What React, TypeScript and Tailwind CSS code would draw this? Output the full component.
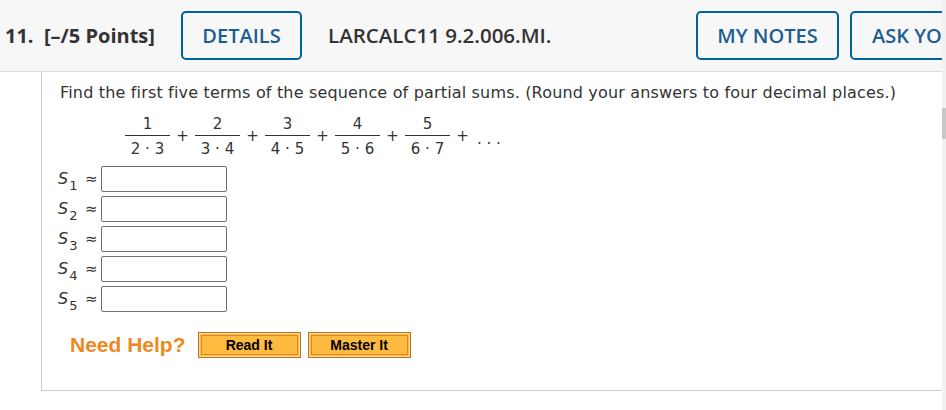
import React from 'react';

const terms = [
  { num: '1', den: '2 · 3' },
  { num: '2', den: '3 · 4' },
  { num: '3', den: '4 · 5' },
  { num: '4', den: '5 · 6' },
  { num: '5', den: '6 · 7' },
];

const HeaderButton: React.FC<{ label: string; className?: string }> = ({ label, className = '' }) => (
  <button
    className={`h-[49px] rounded-[5px] border-2 border-[#00629b] bg-transparent text-[20px] font-semibold text-[#1d5e91] ${className}`}
  >
    {label}
  </button>
);

const HelpButton: React.FC<{ label: string }> = ({ label }) => (
  <button className="h-[26px] w-[103px] border border-[#b8722a] bg-[#ffbb40] p-[2px] shadow-[inset_0_0_0_1px_#ffd98a]">
    <span className="flex h-full w-full items-center justify-center border border-[#cf8a35] text-[14px] font-bold text-black [font-family:'Liberation_Sans',Arial,sans-serif]">
      {label}
    </span>
  </button>
);

export default function App() {
  return (
    <div className="flex h-[410px] w-[946px] overflow-hidden bg-white">
      <div className="flex min-w-0 flex-1 flex-col overflow-hidden">
        {/* question header */}
        <div className="flex h-[72px] shrink-0 items-center border-b border-[#dddddd] bg-[#f7f7f7] pl-[5px] [font-family:'Open_Sans',sans-serif]">
          <span className="w-[176px] shrink-0 text-[20px] font-bold text-[#333]">11.&nbsp; [–/5 Points]</span>
          <HeaderButton label="DETAILS" className="w-[121px] shrink-0" />
          <span className="ml-[26px] w-[368px] shrink-0 text-[20.5px] font-semibold text-[#333]">LARCALC11 9.2.006.MI.</span>
          <HeaderButton label="MY NOTES" className="w-[143px] shrink-0" />
          <HeaderButton label="ASK YOUR TEACHER" className="ml-[11px] w-[220px] shrink-0 whitespace-nowrap px-[20px] text-left" />
        </div>

        {/* question body */}
        <div className="ml-[41px] w-[940px] shrink-0 border-b border-l border-[#cccccc] pb-[32px] pl-[18px] pt-[9px] text-[#333] [font-family:'DejaVu_Sans',Verdana,sans-serif]">
          <p className="text-[16px] leading-[24px] tracking-[0.17px]">
            Find the first five terms of the sequence of partial sums. (Round your answers to four decimal places.)
          </p>

          {/* series */}
          <div className="ml-[65px] mt-[10px] flex items-center text-[15px]">
            {terms.map((t) => (
              <React.Fragment key={t.num}>
                <div className="flex w-[45px] flex-col items-center">
                  <span className="mb-[2px] leading-[18px]">{t.num}</span>
                  <span className="h-px w-full bg-[#333]" />
                  <span className="mt-[4px] leading-[18px]">{t.den}</span>
                </div>
                <span className="w-[25px] text-center">+</span>
              </React.Fragment>
            ))}
            <span className="ml-[2px] mt-[6px] whitespace-pre">. . .</span>
          </div>

          {/* partial sums */}
          <div className="mt-[8px] flex flex-col gap-[4px]">
            {[1, 2, 3, 4, 5].map((n) => (
              <div key={n} className="flex h-[26px] items-center">
                <span className="-ml-[2px] w-[27px] text-[16px] italic leading-[20px]">
                  S<span className="relative top-[6px] ml-[1px] text-[13px] not-italic">{n}</span>
                </span>
                <span className="w-[16px] text-[15px] leading-[20px]">≈</span>
                <input
                  type="text"
                  className="h-[26px] w-[126px] rounded-[2px] border border-[#6f6f6f] bg-white"
                />
              </div>
            ))}
          </div>

          {/* help */}
          <div className="ml-[10px] mt-[20px] flex h-[26px] items-center">
            <span className="mr-[12px] text-[21px] font-bold text-[#ee8a1d] [font-family:'Liberation_Sans',Arial,sans-serif]">
              Need Help?
            </span>
            <HelpButton label="Read It" />
            <span className="w-[7px]" />
            <HelpButton label="Master It" />
          </div>
        </div>
      </div>

      {/* scrollbar */}
      <div className="flex w-[4px] shrink-0 flex-col bg-[#f1f1f1]">
        <div className="mt-[108px] h-[31px] w-full bg-[#c8c8c8]" />
      </div>
    </div>
  );
}
